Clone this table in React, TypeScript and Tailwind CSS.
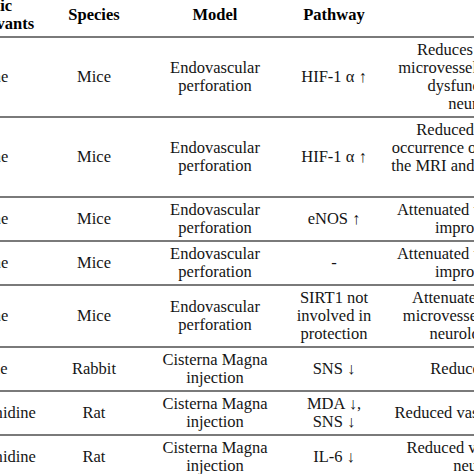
import React from "react";

type Row = {
  drug: string;
  species: string;
  model: string[];
  pathway: string[];
  effect: string[];
};

const rows: Row[] = [
  {
    drug: "Isoflurane",
    species: "Mice",
    model: ["Endovascular", "perforation"],
    pathway: ["HIF-1 α ↑"],
    effect: [
      "Reduces vasospasm, the",
      "microvessel thrombosis, BBB",
      "dysfunction, and less",
      "neuronal death",
    ],
  },
  {
    drug: "Isoflurane",
    species: "Mice",
    model: ["Endovascular", "perforation"],
    pathway: ["HIF-1 α ↑"],
    effect: [
      "Reduced vasospasm and",
      "occurrence of new infarction on",
      "the MRI and better neurological",
      "deficit",
    ],
  },
  {
    drug: "Isoflurane",
    species: "Mice",
    model: ["Endovascular", "perforation"],
    pathway: ["eNOS ↑"],
    effect: ["Attenuated the vasospasm and", "improved outcome"],
  },
  {
    drug: "Isoflurane",
    species: "Mice",
    model: ["Endovascular", "perforation"],
    pathway: ["-"],
    effect: ["Attenuated the vasospasm and", "improved outcome"],
  },
  {
    drug: "Isoflurane",
    species: "Mice",
    model: ["Endovascular", "perforation"],
    pathway: ["SIRT1 not", "involved in", "protection"],
    effect: [
      "Attenuated vasospasm, as",
      "microvessel thrombosis, and",
      "neurological deficits",
    ],
  },
  {
    drug: "Clonidine",
    species: "Rabbit",
    model: ["Cisterna Magna", "injection"],
    pathway: ["SNS ↓"],
    effect: ["Reduced vasospasm"],
  },
  {
    drug: "Dexmedetomidine",
    species: "Rat",
    model: ["Cisterna Magna", "injection"],
    pathway: ["MDA ↓,", "SNS ↓"],
    effect: ["Reduced vasospasm and injury"],
  },
  {
    drug: "Dexmedetomidine",
    species: "Rat",
    model: ["Cisterna Magna", "injection"],
    pathway: ["IL-6 ↓"],
    effect: ["Reduced vasospasm and its", "neuronal loss"],
  },
];

const Lines: React.FC<{ lines: string[] }> = ({ lines }) => (
  <>
    {lines.map((l, i) => (
      <div key={i} className="whitespace-nowrap">
        {l}
      </div>
    ))}
  </>
);

const cell =
  "px-0 py-[3px] text-center align-middle border-b-2 border-[#7a7a7a] overflow-hidden";

export default function App() {
  return (
    <div
      className="w-[474px] h-[474px] overflow-hidden bg-white text-[#151515] text-[16.5px] leading-[18px]"
      style={{ fontFamily: '"Liberation Serif", "DejaVu Serif", serif' }}
    >
      <table className="table-fixed border-collapse w-[718px] ml-[-100px] mt-[-6px]">
        <colgroup>
          <col className="w-[150px]" />
          <col className="w-[88px]" />
          <col className="w-[154px]" />
          <col className="w-[84px]" />
          <col className="w-[242px]" />
        </colgroup>
        <thead>
          <tr className="font-bold text-black">
            <td className={cell}>
              <Lines lines={["Anesthetic", "Other Adjuvants"]} />
            </td>
            <td className={cell}>Species</td>
            <td className={cell}>Model</td>
            <td className={cell}>Pathway</td>
            <td className={cell}>Effect</td>
          </tr>
        </thead>
        <tbody>
          {rows.map((r, i) => (
            <tr key={i}>
              <td className={cell}>{r.drug}</td>
              <td className={cell}>{r.species}</td>
              <td className={cell}>
                <Lines lines={r.model} />
              </td>
              <td className={cell}>
                <Lines lines={r.pathway} />
              </td>
              <td className={cell}>
                <Lines lines={r.effect} />
              </td>
            </tr>
          ))}
        </tbody>
      </table>
    </div>
  );
}
